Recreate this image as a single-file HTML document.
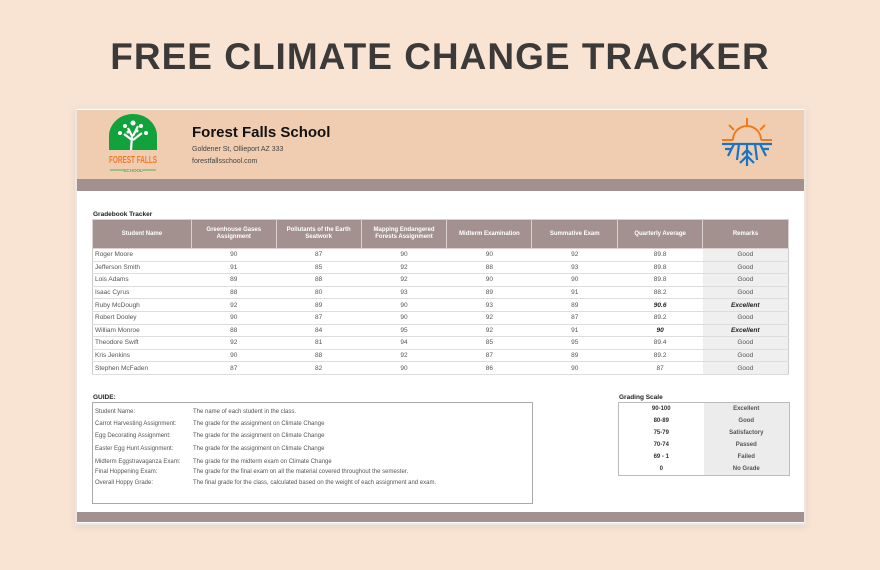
<!DOCTYPE html>
<html><head><meta charset="utf-8"><style>
*{margin:0;padding:0;box-sizing:border-box}
body{width:880px;height:570px;background:#f9e4d4;font-family:"Liberation Sans",sans-serif;position:relative;overflow:hidden}
.abs{position:absolute}
h1{position:absolute;left:0;width:880px;top:36px;text-align:center;font-size:37px;font-weight:bold;color:#3c3a39;letter-spacing:1px}
.card{left:75px;top:107px;width:731px;height:418px;background:#fff;border:2px solid #ece6e2;box-shadow:0 2px 8px rgba(0,0,0,.08)}
table{border-collapse:collapse;position:absolute;font-size:6.5px;color:#555}
.gt{left:92px;top:219px;width:697px}
.gt th{background:#a39190;color:#fff;font-weight:bold;height:29px;border:1px solid #d9d0cf;font-size:6px;line-height:7px}
.gt td{height:12.6px;border-bottom:1px solid #ddd;text-align:center;padding:0}
.gt td:first-child{text-align:left;padding-left:2px}
.gt td:last-child{background:#efefef}
.gt{border-left:1px solid #ccc;border-right:1px solid #ccc}
.b{font-weight:bold;font-style:italic;color:#222}
.gs{left:618px;top:402px;width:171px;border:1px solid #bbb;table-layout:fixed}
.gs td{height:12.2px;text-align:center;font-weight:bold;font-size:6px;color:#333}
.gs td:last-child{background:#ececec;color:#555}
</style></head><body>
<h1>FREE CLIMATE CHANGE TRACKER</h1>
<div class="abs card"></div>
<div class="abs" style="left:77px;top:110px;width:727px;height:69px;background:#f0cdb0"></div>
<div class="abs" style="left:77px;top:179px;width:727px;height:12px;background:#a39190"></div>
<svg class="abs" style="left:106px;top:114px" width="54" height="60" viewBox="0 0 54 60">
<path d="M3 36 L3 22 A24 22 0 0 1 51 22 L51 36 Z" fill="#12a23c"/>
<path d="M25 36 L26 22 L22 14 M27 22 L32 12 M26 26 L18 20 M27 26 L36 19" stroke="#fff" stroke-width="2.2" fill="none"/>
<circle cx="27" cy="9" r="2.5" fill="#fff"/><circle cx="19" cy="12" r="2" fill="#fff"/><circle cx="35" cy="12" r="2" fill="#fff"/><circle cx="14" cy="19" r="2" fill="#fff"/><circle cx="40" cy="19" r="2" fill="#fff"/><circle cx="22" cy="18" r="1.5" fill="#fff"/><circle cx="31" cy="17" r="1.5" fill="#fff"/>
<text x="3" y="49" font-family="Liberation Sans" font-weight="bold" font-size="10" fill="#f07a2a" textLength="48" lengthAdjust="spacingAndGlyphs">FOREST FALLS</text>
<line x1="4" y1="56" x2="18" y2="56" stroke="#12a23c" stroke-width=".7"/><line x1="36" y1="56" x2="50" y2="56" stroke="#12a23c" stroke-width=".7"/>
<text x="27" y="58" text-anchor="middle" font-family="Liberation Sans" font-size="4.5" fill="#12a23c">SCHOOL</text>
</svg>
<div class="abs" style="left:192px;top:124px;font-size:15px;font-weight:bold;color:#111">Forest Falls School</div>
<div class="abs" style="left:192px;top:146px;font-size:7px;color:#444">Goldener St, Ollieport AZ 333</div>
<div class="abs" style="left:192px;top:158px;font-size:7px;color:#444">forestfallsschool.com</div>
<svg class="abs" style="left:720px;top:116px" width="54" height="52" viewBox="0 0 54 52">
<g stroke="#f07a1a" stroke-width="2" fill="none"><path d="M13 24 A14 14 0 0 1 41 24"/><path d="M27 2 V9 M9 9 L14 14 M45 9 L40 14 M2 24 H13 M41 24 H52"/></g>
<g stroke="#1a74c2" stroke-width="2.2" fill="none"><path d="M2 28 H52 M27 28 V50 M27 40 L20 47 M27 40 L34 47 M27 34 L22 39 M27 34 L32 39 M14 28 L8 40 M40 28 L46 40 M12 33 L5 33 M42 33 L49 33 M19 28 L17 44 M35 28 L37 44"/></g>
</svg>
<div class="abs" style="left:93px;top:211px;font-size:6.5px;font-weight:bold;color:#222">Gradebook Tracker</div>
<table class="gt">
<colgroup><col style="width:99px"><col style="width:85px"><col style="width:85px"><col style="width:86px"><col style="width:85px"><col style="width:86px"><col style="width:85px"><col style="width:86px"></colgroup>
<tr><th>Student Name</th><th>Greenhouse Gases<br>Assignment</th><th>Pollutants of the Earth<br>Seatwork</th><th>Mapping Endangered<br>Forests Assignment</th><th>Midterm Examination</th><th>Summative Exam</th><th>Quarterly Average</th><th>Remarks</th></tr>
<tr><td>Roger Moore</td><td>90</td><td>87</td><td>90</td><td>90</td><td>92</td><td>89.8</td><td>Good</td></tr>
<tr><td>Jefferson Smith</td><td>91</td><td>85</td><td>92</td><td>88</td><td>93</td><td>89.8</td><td>Good</td></tr>
<tr><td>Lois Adams</td><td>89</td><td>88</td><td>92</td><td>90</td><td>90</td><td>89.8</td><td>Good</td></tr>
<tr><td>Isaac Cyrus</td><td>88</td><td>80</td><td>93</td><td>89</td><td>91</td><td>88.2</td><td>Good</td></tr>
<tr><td>Ruby McDough</td><td>92</td><td>89</td><td>90</td><td>93</td><td>89</td><td class="b">90.6</td><td class="b">Excellent</td></tr>
<tr><td>Robert Dooley</td><td>90</td><td>87</td><td>90</td><td>92</td><td>87</td><td>89.2</td><td>Good</td></tr>
<tr><td>William Monroe</td><td>88</td><td>84</td><td>95</td><td>92</td><td>91</td><td class="b">90</td><td class="b">Excellent</td></tr>
<tr><td>Theodore Swift</td><td>92</td><td>81</td><td>94</td><td>85</td><td>95</td><td>89.4</td><td>Good</td></tr>
<tr><td>Kris Jenkins</td><td>90</td><td>88</td><td>92</td><td>87</td><td>89</td><td>89.2</td><td>Good</td></tr>
<tr><td>Stephen McFaden</td><td>87</td><td>82</td><td>90</td><td>86</td><td>90</td><td>87</td><td>Good</td></tr>
</table>
<div class="abs" style="left:93px;top:394px;font-size:6.5px;font-weight:bold;color:#222">GUIDE:</div>
<div class="abs" style="left:92px;top:402px;width:441px;height:102px;border:1px solid #aaa"></div>
<div class="abs" style="left:95px;top:406px;font-size:6px;color:#555;line-height:12.2px">
<div>Student Name:</div><div>Carrot Harvesting Assignment:</div><div>Egg Decorating Assignment:</div><div>Easter Egg Hunt Assignment:</div><div style="line-height:10px;margin-top:2px">Midterm Eggstravaganza Exam:</div><div style="line-height:10px">Final Hoppening Exam:</div><div>Overall Hoppy Grade:</div></div>
<div class="abs" style="left:193px;top:406px;font-size:6px;color:#555;line-height:12.2px">
<div>The name of each student in the class.</div><div>The grade for the assignment on Climate Change</div><div>The grade for the assignment on Climate Change</div><div>The grade for the assignment on Climate Change</div><div style="line-height:10px;margin-top:2px">The grade for the midterm exam on Climate Change</div><div style="line-height:10px">The grade for the final exam on all the material covered throughout the semester.</div><div>The final grade for the class, calculated based on the weight of each assignment and exam.</div></div>
<div class="abs" style="left:619px;top:394px;font-size:6.5px;font-weight:bold;color:#222">Grading Scale</div>
<table class="gs">
<colgroup><col style="width:85px"><col style="width:86px"></colgroup>
<tr><td>90-100</td><td>Excellent</td></tr><tr><td>80-89</td><td>Good</td></tr><tr><td>75-79</td><td>Satisfactory</td></tr><tr><td>70-74</td><td>Passed</td></tr><tr><td>69 - 1</td><td>Failed</td></tr><tr><td>0</td><td>No Grade</td></tr>
</table>
<div class="abs" style="left:77px;top:512px;width:727px;height:10px;background:#a39190"></div>
</body></html>
